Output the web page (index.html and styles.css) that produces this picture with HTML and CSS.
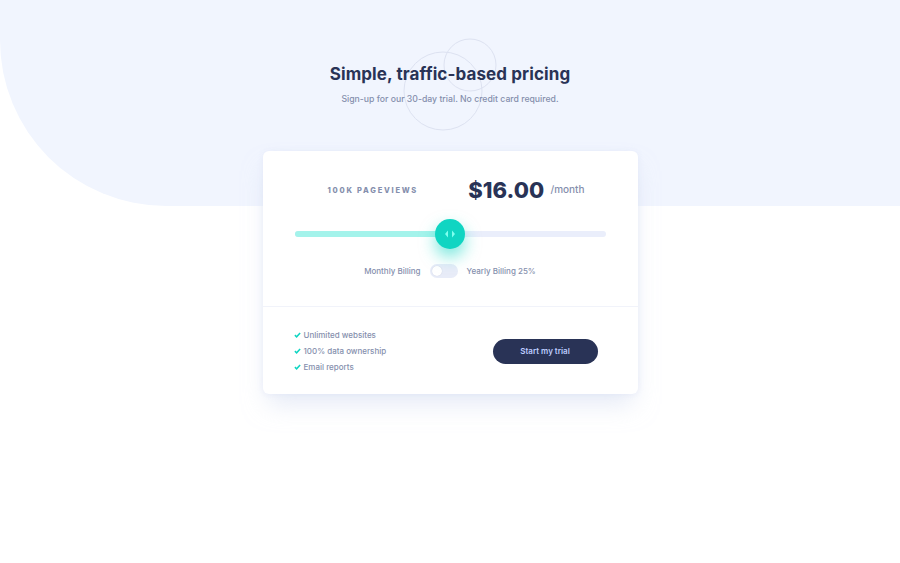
FILE: index.html
```html
<!DOCTYPE html>
<html lang="en">
<head>
<meta charset="utf-8">
<title>Interactive pricing component</title>
<link rel="stylesheet" href="styles.css">
</head>
<body>
<header class="hero">
  <svg class="pattern" width="120" height="110" viewBox="0 0 120 110" aria-hidden="true">
    <circle cx="41" cy="61" r="39" fill="none" stroke="#dde2f1" stroke-width="1"/>
    <circle cx="68" cy="35" r="26" fill="none" stroke="#dde2f1" stroke-width="1"/>
  </svg>
  <h1 class="title">Simple, traffic-based pricing</h1>
  <p class="subtitle">Sign-up for our 30-day trial. No credit card required.</p>
</header>
<main class="card">
  <section class="card-top">
    <div class="price-row">
      <span class="views">100K Pageviews</span>
      <span class="price"><span class="amount">$16.00</span><span class="per">/month</span></span>
    </div>
    <div class="slider">
      <div class="track"><div class="fill" style="width:50%"></div></div>
      <div class="thumb" style="left:50%">
        <svg width="10" height="8" viewBox="0 0 10 8" aria-hidden="true">
          <path d="M3 0.5 L0 4 L3 7.5 Z" fill="#80ffef"/>
          <path d="M7 0.5 L10 4 L7 7.5 Z" fill="#80ffef"/>
        </svg>
      </div>
    </div>
    <div class="billing">
      <span>Monthly Billing</span>
      <span class="toggle"><span class="knob"></span></span>
      <span>Yearly Billing 25%</span>
    </div>
  </section>
  <section class="card-bottom">
    <ul class="features">
      <li><svg width="7" height="6" viewBox="0 0 9 8" aria-hidden="true"><path d="M1 4.2 L3.3 6.4 L8 1.2" fill="none" stroke="#10d5c2" stroke-width="2"/></svg>Unlimited websites</li>
      <li><svg width="7" height="6" viewBox="0 0 9 8" aria-hidden="true"><path d="M1 4.2 L3.3 6.4 L8 1.2" fill="none" stroke="#10d5c2" stroke-width="2"/></svg>100% data ownership</li>
      <li><svg width="7" height="6" viewBox="0 0 9 8" aria-hidden="true"><path d="M1 4.2 L3.3 6.4 L8 1.2" fill="none" stroke="#10d5c2" stroke-width="2"/></svg>Email reports</li>
    </ul>
    <button class="cta">Start my trial</button>
  </section>
</main>
</body>
</html>
```
FILE: styles.css
```css
* { box-sizing: border-box; }
html, body { margin: 0; padding: 0; }
body {
  background: #ffffff;
  font-family: "Inter", "Liberation Sans", sans-serif;
  color: #858fad;
  width: 900px;
  height: 563px;
  overflow: hidden;
}
.hero {
  position: relative;
  height: 206px;
  background: #f1f5fe;
  border-bottom-left-radius: 166px;
  padding-top: 63px;
  text-align: center;
}
.pattern {
  position: absolute;
  left: 402px;
  top: 30px;
}
.title {
  position: relative;
  margin: 0;
  font-size: 17px;
  line-height: 22px;
  font-weight: 700;
  color: #293356;
  letter-spacing: 0.1px;
}
.subtitle {
  position: relative;
  margin: 7px 0 0;
  font-size: 8.7px;
  line-height: 14px;
  font-weight: 500;
  color: #858fad;
}
.card {
  width: 375px;
  margin: -55px auto 0;
  background: #fff;
  border-radius: 6px;
  box-shadow: 0 15px 25px -5px rgba(207, 216, 239, 0.55), 0 0 6px rgba(225, 230, 248, 0.6);
  position: relative;
}
.card-top {
  padding: 24px 32px 28px;
  border-bottom: 1px solid #f1f3fa;
}
.price-row {
  display: flex;
  align-items: center;
  justify-content: space-between;
  height: 30px;
  padding: 0 21px 0 33px;
}
.views {
  font-size: 7.5px;
  font-weight: 800;
  letter-spacing: 1.75px;
  text-transform: uppercase;
  color: #858fad;
}
.price { display: flex; align-items: center; gap: 6px; }
.amount {
  font-size: 22px;
  font-weight: 800;
  color: #293356;
  letter-spacing: 0.1px;
}
.per {
  font-size: 10px;
  font-weight: 500;
  color: #858fad;
  margin-top: -2px;
}
.slider {
  position: relative;
  height: 30px;
  margin-top: 14px;
  display: flex;
  align-items: center;
}
.track {
  width: 100%;
  height: 6px;
  border-radius: 3px;
  background: #eaeefb;
  overflow: hidden;
}
.fill { height: 100%; background: #a4f3eb; }
.thumb {
  position: absolute;
  top: 0;
  width: 30px;
  height: 30px;
  margin-left: -15px;
  border-radius: 50%;
  background: #10d5c2;
  box-shadow: 0 8px 16px rgba(16, 213, 194, 0.55);
  display: flex;
  align-items: center;
  justify-content: center;
}
.billing {
  margin-top: 15px;
  height: 14px;
  display: flex;
  align-items: center;
  justify-content: center;
  gap: 8px;
  font-size: 8px;
  font-weight: 500;
  color: #858fad;
}
.toggle {
  width: 28px;
  height: 14px;
  border-radius: 7px;
  background: #e8ecf8;
  display: flex;
  align-items: center;
  padding: 0 2px;
  margin: 0 1px;
}
.knob {
  width: 10px;
  height: 10px;
  border-radius: 50%;
  background: #fff;
  box-shadow: 0 0 1px rgba(133,143,173,0.4);
}
.card-bottom {
  display: flex;
  align-items: center;
  justify-content: space-between;
  padding: 20px 40px 19px 31px;
}
.features {
  list-style: none;
  margin: 0;
  padding: 0;
}
.features li {
  display: flex;
  align-items: center;
  gap: 3px;
  height: 16px;
  font-size: 8px;
  font-weight: 500;
  color: #858fad;
}
.cta {
  width: 105px;
  height: 25px;
  border: 0;
  border-radius: 13px;
  background: #293356;
  color: #bdccff;
  font-family: inherit;
  font-size: 8px;
  font-weight: 600;
  padding: 0;
}
```
